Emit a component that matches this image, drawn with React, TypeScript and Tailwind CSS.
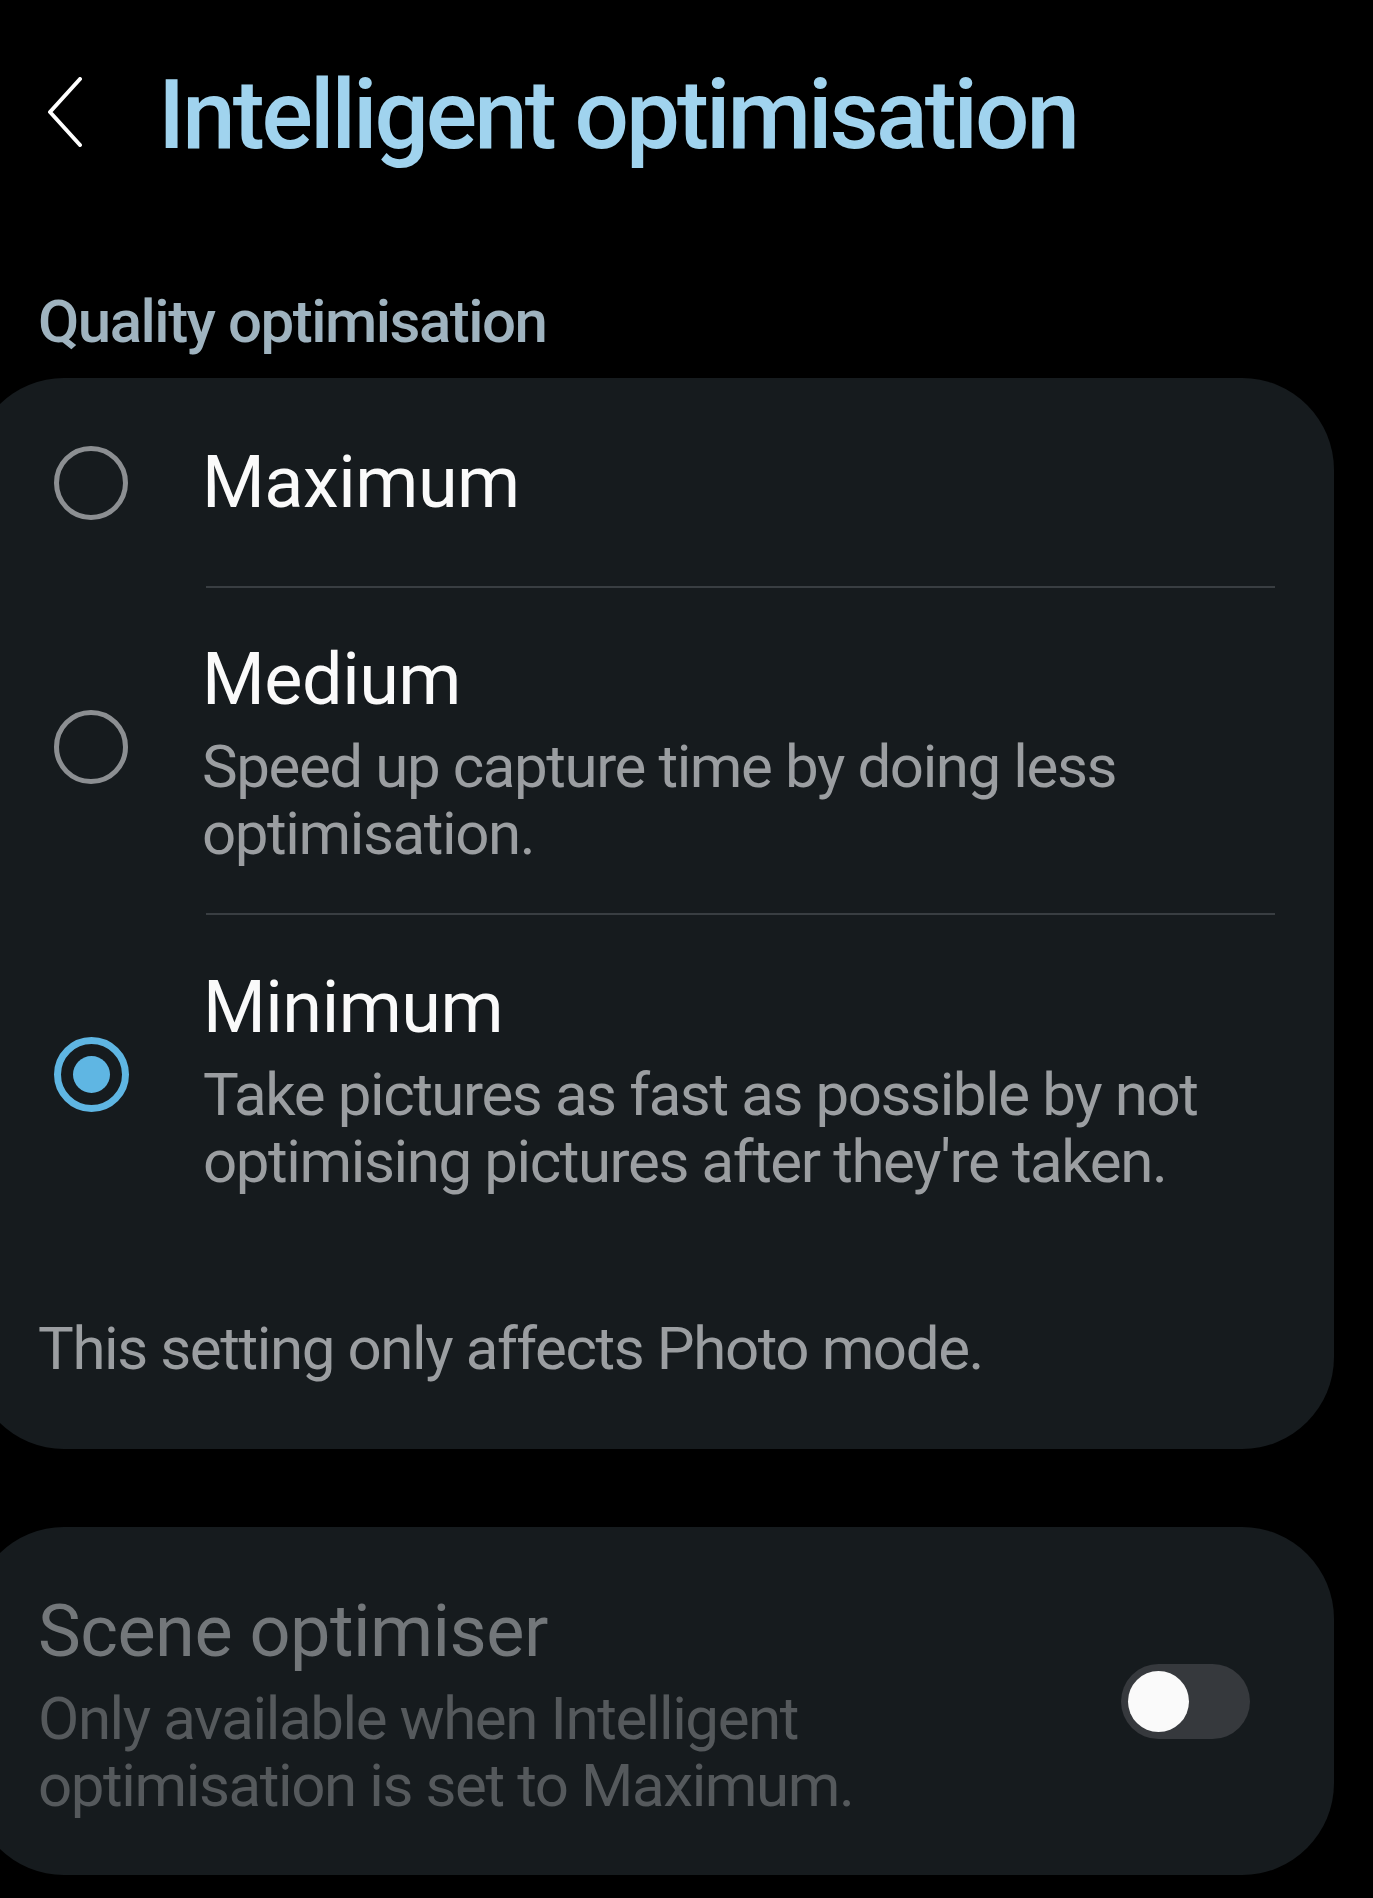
import React from 'react';

const BackIcon = () => (
  <svg width="36" height="70" viewBox="0 0 36 70" fill="none" stroke="#ffffff" strokeWidth="4" strokeLinecap="round" strokeLinejoin="round"><path d="M33 2 L3 35 L33 68" /></svg>
);

type Option = { id: string; title: string; desc?: string[] };

const options: Option[] = [
  { id: 'max', title: 'Maximum' },
  { id: 'med', title: 'Medium', desc: ['Speed up capture time by doing less', 'optimisation.'] },
  { id: 'min', title: 'Minimum', desc: ['Take pictures as fast as possible by not', "optimising pictures after they're taken."] },
];

function Radio({ checked }: { checked: boolean }) {
  if (checked) {
    return (
      <div className="w-[75px] h-[75px] shrink-0 rounded-full border-[7px] border-[#5fb6e3] flex items-center justify-center">
        <div className="w-[37px] h-[37px] rounded-full bg-[#5fb6e3]" />
      </div>
    );
  }
  return <div className="w-[74px] h-[74px] shrink-0 rounded-full border-[5px] border-[#8c8f92]" />;
}

export default function App() {
  const selected = 'min';

  return (
    <div className="w-[1373px] h-[1898px] bg-black overflow-hidden font-['Roboto',sans-serif]">
      {/* Header */}
      <div className="flex items-center pt-[67px] pl-[47px]">
        <div className="-mt-[6px]"><BackIcon /></div>
        <h1 className="ml-[75px] text-[96px] leading-[96px] font-medium tracking-[-3px] text-[#a0d3ee] whitespace-nowrap">Intelligent optimisation</h1>
      </div>

      {/* Section label */}
      <p className="mt-[129px] pl-[38px] text-[60px] leading-[60px] font-medium tracking-[-1.5px] text-[#9fb3bf] whitespace-nowrap">Quality optimisation</p>

      {/* Quality card */}
      <div className="mt-[26px] -ml-[28px] w-[1362px] rounded-[92px] bg-[#161b1e] pb-[67px]">
        {options.map((opt, i) => (
          <div key={opt.id}>
            {i > 0 && <div className="ml-[234px] mr-[59px] h-[2px] bg-[#393e42]" />}
            <div className={`flex items-center pl-[82px] ${i === 0 ? 'pt-[63px] pb-[61px]' : i === 1 ? 'pt-[50px] pb-[46px]' : 'pt-[51px]'}`}>
              <div className={opt.desc ? '-mt-[12px]' : ''}>
                <Radio checked={opt.id === selected} />
              </div>
              <div className="ml-[74px] flex flex-col">
                <span className="text-[72px] leading-[84px] tracking-[-0.5px] text-[#fafafa] whitespace-nowrap">{opt.title}</span>
                {opt.desc && (
                  <div className="mt-[11px] text-[60px] leading-[67px] tracking-[-1.4px] text-[#9b9ea1]">
                    {opt.desc.map(line => (
                      <div key={line} className="whitespace-nowrap">{line}</div>
                    ))}
                  </div>
                )}
              </div>
            </div>
          </div>
        ))}
        <p className="mt-[120px] pl-[66px] text-[60px] leading-[67px] tracking-[-1.4px] text-[#9b9ea1] whitespace-nowrap">This setting only affects Photo mode.</p>
      </div>

      {/* Scene optimiser card (disabled) */}
      <div className="mt-[78px] -ml-[28px] w-[1362px] rounded-[92px] bg-[#161b1e] pt-[63px] pb-[56px] pl-[66px] pr-[84px] flex items-center justify-between">
        <div className="flex flex-col">
          <span className="text-[72px] leading-[84px] tracking-[-0.5px] text-[#73777a] whitespace-nowrap">Scene optimiser</span>
          <div className="mt-[11px] text-[60px] leading-[67px] tracking-[-1.4px] text-[#55595c]">
            <div className="whitespace-nowrap">Only available when Intelligent</div>
            <div className="whitespace-nowrap">optimisation is set to Maximum.</div>
          </div>
        </div>
        <div className="-mt-[6px] w-[129px] h-[75px] rounded-full bg-[#36393d] flex items-center px-[7px]">
          <div className="w-[61px] h-[61px] rounded-full bg-[#fafafa]" />
        </div>
      </div>
    </div>
  );
}
